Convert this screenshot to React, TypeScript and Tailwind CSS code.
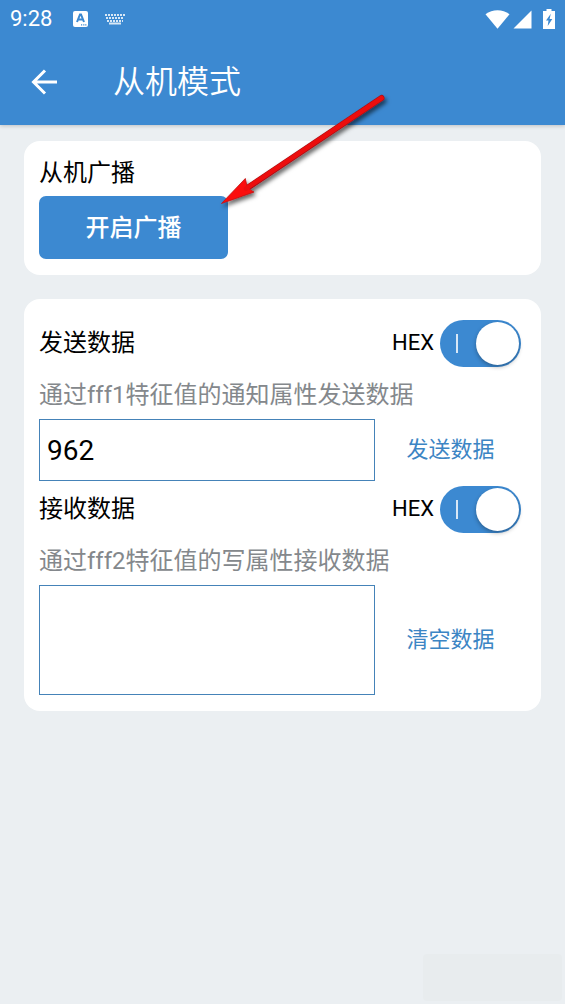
import { useState } from "react";

const StatusBar = () => (
  <div className="flex h-[38px] items-center px-[10px] text-[22px] leading-none">
    <span>9:28</span>
    <svg className="ml-[21px]" width="15" height="16" viewBox="0 0 15 16" aria-hidden="true">
      <rect width="15" height="16" rx="2" fill="#fff" />
      <path
        d="M4 11 7 3.4h1L11 11M5 8.6h5"
        fill="none"
        stroke="#3c89d1"
        strokeWidth="2"
      />
      <path d="M8 13.8h1.2M10.2 13.8h1.2M12.2 13.8h1.2" stroke="#3c89d1" strokeWidth="1.2" />
    </svg>
    <svg className="ml-[17px]" width="20" height="12" viewBox="0 0 20 12" aria-hidden="true">
      <g stroke="#fff" strokeWidth="2" opacity="0.8">
        <path d="M0 2h20" strokeDasharray="2 1" />
        <path d="M1 5h18" strokeDasharray="2 1" />
        <path d="M2 8h16" strokeDasharray="2 1" />
        <path d="M4 10.5h12" />
      </g>
    </svg>
    <div className="ml-auto flex items-center">
      <svg width="25" height="19" viewBox="0 0 25 19" fill="#fff" aria-hidden="true">
        <path d="M0.5 4.2C7.5-1.2 17.5-1.2 24.5 4.2L12.5 18.8Z" />
      </svg>
      <svg className="ml-[3px]" width="19" height="19" viewBox="0 0 19 19" fill="#fff" aria-hidden="true">
        <path d="M18.5 0.5v18h-18Z" />
      </svg>
      <svg className="ml-[11px]" width="12" height="20" viewBox="0 0 12 20" aria-hidden="true">
        <path d="M3.5 0h5v2H12v18H0V2h3.5Z" fill="#fff" />
        <path d="M7.8 4.8 3 11.6h2.5l-.8 5.4 4.6-7H6.6Z" fill="#3c89d1" />
      </svg>
    </div>
  </div>
);

const Header = () => (
  <header className="bg-[#3c89d1] text-white shadow-[0_1px_4px_rgba(0,0,0,0.2)]">
    <StatusBar />
    <div className="flex h-[87px] items-center pl-[31px]">
      <button type="button" aria-label="返回">
        <svg width="26" height="26" viewBox="0 0 26 26" fill="none" aria-hidden="true">
          <path d="M26 13H2.5M14 1.5 2.5 13 14 24.5" stroke="#fff" strokeWidth="3" />
        </svg>
      </button>
      <h1 className="ml-14 text-[32px] font-[350]">从机模式</h1>
    </div>
  </header>
);

const HexSwitch = ({ id }: { id: string }) => {
  const [checked, setChecked] = useState(true);

  return (
    <label htmlFor={id} className="mr-[5px] flex cursor-pointer items-center gap-[6px] text-[22px]">
      HEX
      <input
        id={id}
        type="checkbox"
        role="switch"
        className="peer sr-only"
        checked={checked}
        onChange={() => setChecked((prev) => !prev)}
      />
      <span className="flex h-[47px] w-[81px] flex-row-reverse items-center justify-between rounded-full bg-gray-400 px-[2px] peer-checked:flex-row peer-checked:bg-[#3c89d1]">
        <span className="ml-[14px] h-[19px] w-[2px] bg-white/80" />
        <span className="size-[43px] rounded-full bg-white shadow-[0_2px_4px_rgba(0,0,0,0.3)]" />
      </span>
    </label>
  );
};

const DataHeading = ({ title, switchId }: { title: string; switchId: string }) => (
  <div className="flex h-14 items-center justify-between">
    <h2>{title}</h2>
    <HexSwitch id={switchId} />
  </div>
);

const hint = "flex h-12 items-center text-[#84888c]";
const linkButton = "flex-1 text-center text-[22px] text-[#3c85c4]";
const field = "block w-[69%] border border-[#4583b8] bg-white px-[7px] text-[28px] outline-none";

// Pointer towards the broadcast button
const Arrow = () => (
  <svg
    className="pointer-events-none absolute left-[216px] top-[90px]"
    width="180"
    height="125"
    viewBox="216 90 180 125"
    aria-hidden="true"
  >
    <defs>
      <filter id="arrow-shadow" x="-10%" y="-10%" width="130%" height="130%">
        <feDropShadow dx="2" dy="3" stdDeviation="2" floodColor="#000" floodOpacity="0.6" />
      </filter>
    </defs>
    <g filter="url(#arrow-shadow)">
      <path d="M381.5 98 248 187.5" stroke="#a51218" strokeWidth="6" strokeLinecap="round" />
      <path
        d="M221.5 203.5 245.3 178.5 247 186 251 190.5 254 192Z"
        fill="#fb0a0a"
        stroke="#c01015"
        strokeWidth="0.8"
      />
      <path d="M381.5 98 246 188.6" stroke="#ec0c0c" strokeWidth="4.6" strokeLinecap="round" />
    </g>
  </svg>
);

const App = () => {
  const [sendData, setSendData] = useState("962");
  const [received, setReceived] = useState("");
  const [advertising, setAdvertising] = useState(false);

  return (
    <div className="relative min-h-screen bg-[#ebeff2] font-[Roboto,'Noto_Sans_CJK_SC',sans-serif] text-black">
      <Header />
      <main className="flex flex-col gap-6 px-6 py-4 text-[24px] leading-8">
        <section className="rounded-2xl bg-white px-[15px] py-4">
          <h2>从机广播</h2>
          <button
            type="button"
            aria-pressed={advertising}
            className="mt-[7px] h-[63px] w-[189px] rounded-[7px] bg-[#3c89d1] font-medium text-white"
            onClick={() => setAdvertising((prev) => !prev)}
          >
            开启广播
          </button>
        </section>

        <section className="rounded-2xl bg-white px-[15px] py-4">
          <DataHeading title="发送数据" switchId="send-hex" />
          <label htmlFor="send-data" className={hint}>
            通过fff1特征值的通知属性发送数据
          </label>
          <div className="flex items-center">
            <input
              id="send-data"
              type="text"
              className={`${field} h-[62px]`}
              value={sendData}
              onChange={(e) => setSendData(e.target.value)}
            />
            <button type="button" className={linkButton}>
              发送数据
            </button>
          </div>

          <DataHeading title="接收数据" switchId="receive-hex" />
          <label htmlFor="receive-data" className={hint}>
            通过fff2特征值的写属性接收数据
          </label>
          <div className="flex items-center">
            <textarea
              id="receive-data"
              className={`${field} h-[110px] resize-none`}
              value={received}
              readOnly
            />
            <button type="button" className={linkButton} onClick={() => setReceived("")}>
              清空数据
            </button>
          </div>
        </section>
      </main>
      <Arrow />
      <div className="absolute bottom-[3px] right-[3px] h-[47px] w-[139px] rounded-sm bg-[#e8ecee]" />
    </div>
  );
};

export default App;
